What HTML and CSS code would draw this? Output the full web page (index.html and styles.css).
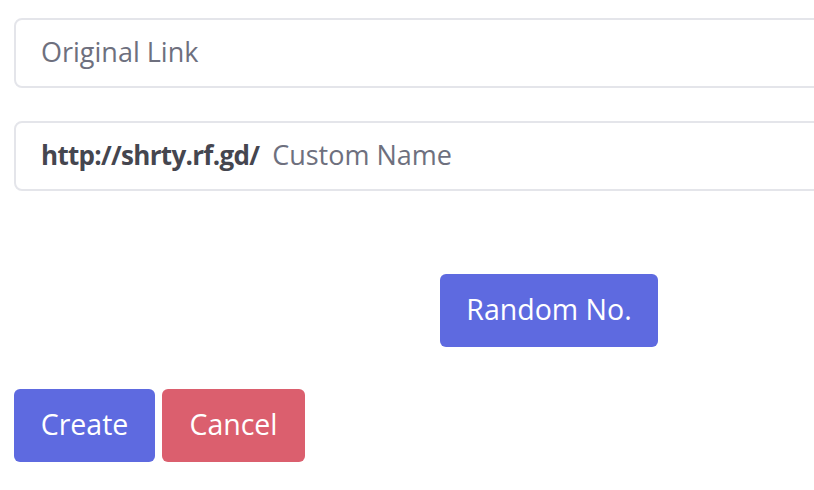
FILE: index.html
```html
<!DOCTYPE html>
<html>
<head>
<meta charset="utf-8">
<link rel="stylesheet" href="styles.css">
</head>
<body>
<div class="form">
  <div class="field">
    <span class="placeholder">Original Link</span>
  </div>
  <div class="field field-group">
    <span class="prefix">http://shrty.rf.gd/</span>
    <span class="placeholder">Custom Name</span>
  </div>
  <div class="random-row">
    <button class="btn btn-primary btn-random">Random No.</button>
  </div>
  <div class="actions">
    <button class="btn btn-primary">Create</button>
    <button class="btn btn-danger">Cancel</button>
  </div>
</div>
</body>
</html>
```
FILE: styles.css
```css
html, body {
  margin: 0;
  padding: 0;
  background: #ffffff;
  overflow: hidden;
}
body {
  font-family: "Open Sans", "Noto Sans", sans-serif;
  width: 814px;
  height: 490px;
}
.form {
  padding: 18px 0 0 14px;
  width: 840px;
  display: flex;
  flex-direction: column;
}
.field {
  box-sizing: border-box;
  height: 70px;
  border: 2px solid #e4e5ea;
  border-radius: 8px;
  display: flex;
  align-items: center;
  padding: 0 0 3px 25px;
  font-size: 27px;
}
.field-group {
  margin-top: 33px;
}
.placeholder {
  color: #6e707e;
}
.prefix {
  font-weight: 700;
  font-size: 26px;
  color: #45464f;
  letter-spacing: -0.7px;
  margin-right: 13px;
}
.random-row {
  margin-top: 83px;
  padding-left: 426px;
  display: flex;
}
.btn {
  font-family: inherit;
  font-size: 28.5px;
  color: #ffffff;
  border: none;
  border-radius: 6px;
  height: 73px;
  padding: 0 0 4px 0;
  cursor: pointer;
}
.btn-primary {
  background: #5e6ae0;
}
.btn-danger {
  background: #db5f6e;
}
.btn-random {
  width: 218px;
}
.actions {
  margin-top: 42px;
  display: flex;
  gap: 7px;
}
.actions .btn-primary { width: 141px; }
.actions .btn-danger { width: 143px; }
```
